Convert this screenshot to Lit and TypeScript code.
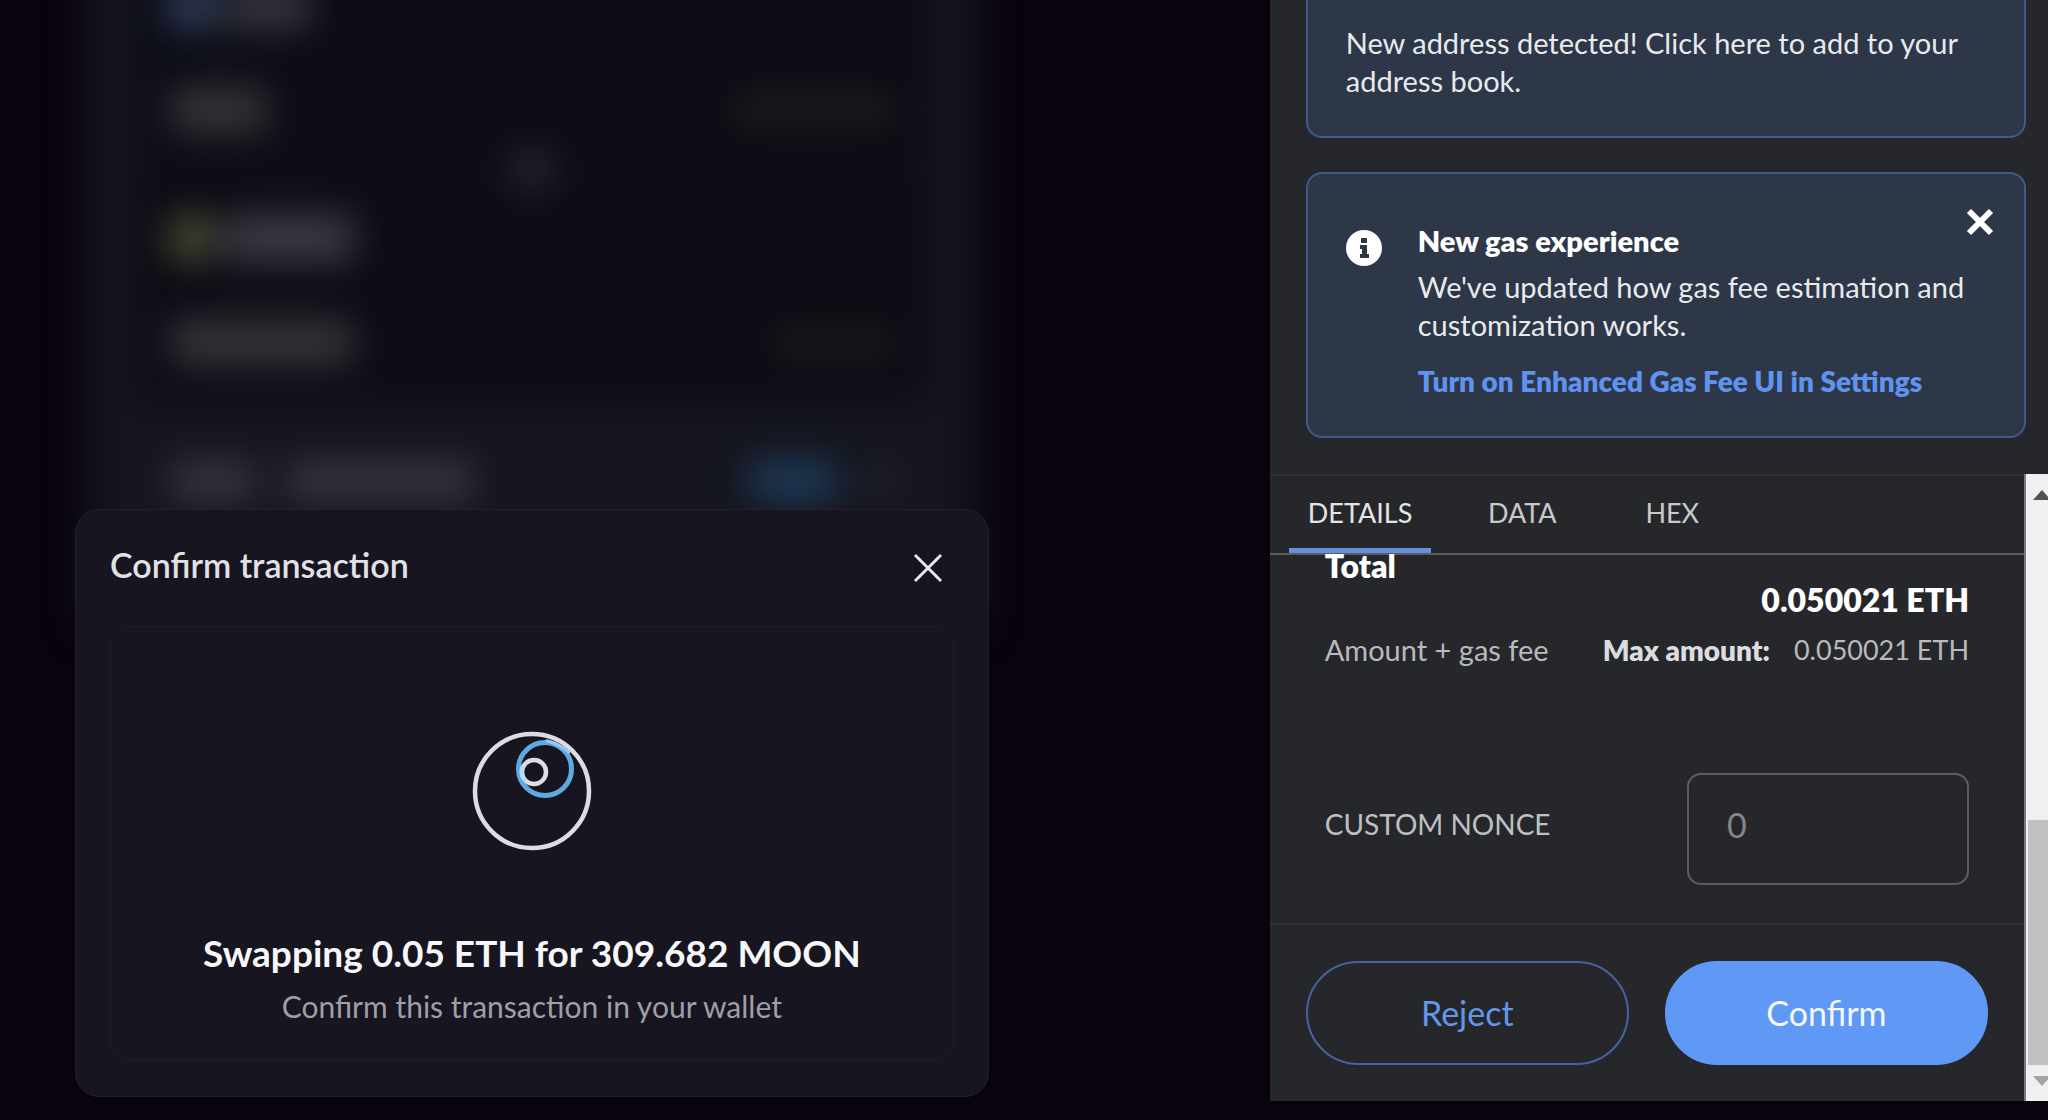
import { LitElement, html, css } from "lit";
import { customElement, state } from "lit/decorators.js";

/** Out-of-focus swap form that sits behind the dialog. */
@customElement("swap-backdrop")
export class SwapBackdrop extends LitElement {
  static styles = css`
    :host {
      display: block;
      filter: blur(18px);
    }
    .card {
      margin: -60px 8px 0;
      padding: 0 52px 130px;
      border-radius: 20px;
      background: #14151d;
    }
    .field {
      padding: 44px 34px 36px;
      background: #0b0c14;
    }
    .row {
      display: flex;
      align-items: center;
      gap: 10px;
      height: 44px;
    }
    .row + .row {
      margin-top: 60px;
    }
    .push {
      margin-left: auto;
    }
    .blob {
      height: 48px;
      border-radius: 12px;
      background: #333338;
    }
    .eth {
      width: 44px;
      background: #344062;
    }
    .moon {
      width: 44px;
      background: #4a4a32;
    }
    .symbol {
      width: 88px;
      background: #34343e;
    }
    .symbol.wide {
      width: 132px;
      background: #3b3b47;
    }
    .amount {
      width: 100px;
    }
    .amount.wide {
      width: 186px;
    }
    .balance {
      width: 164px;
      height: 34px;
      background: #1d1d1e;
    }
    .balance.short {
      width: 124px;
      background: #1a1a1c;
    }
    .flip {
      width: 48px;
      height: 48px;
      margin: -22px auto;
      border-radius: 50%;
      background: #23242f;
      position: relative;
    }
    .rate {
      display: flex;
      gap: 28px;
      padding: 60px 34px 0;
    }
    .rate .blob {
      height: 42px;
      background: #34343e;
    }
    .label {
      width: 88px;
    }
    .value {
      width: 190px;
    }
    .rate .saver {
      width: 92px;
      background: #1e3858;
    }
    .rate .gear {
      width: 28px;
      background: #20212a;
    }
  `;

  render() {
    return html`
      <div class="card" aria-hidden="true">
        <div class="field">
          <div class="row"><div class="blob eth"></div><div class="blob symbol"></div></div>
          <div class="row">
            <div class="blob amount"></div>
            <div class="blob balance push"></div>
          </div>
        </div>
        <div class="flip"></div>
        <div class="field">
          <div class="row"><div class="blob moon"></div><div class="blob symbol wide"></div></div>
          <div class="row">
            <div class="blob amount wide"></div>
            <div class="blob balance short push"></div>
          </div>
        </div>
        <div class="rate">
          <div class="blob label"></div>
          <div class="blob value"></div>
          <div class="blob saver push"></div>
          <div class="blob gear"></div>
        </div>
      </div>
    `;
  }
}

@customElement("confirm-dialog")
export class ConfirmDialog extends LitElement {
  static styles = css`
    :host {
      display: block;
      font-family: Lato, "Liberation Sans", sans-serif;
    }
    .dialog {
      box-sizing: border-box;
      padding: 36px 34px;
      border: 1px solid #201f2a;
      border-radius: 24px;
      background: #171520;
      color: #e2e1e6;
    }
    .head {
      display: flex;
      align-items: flex-start;
      justify-content: space-between;
      padding-right: 10px;
      margin-bottom: 40px;
    }
    .title {
      margin: 0;
      font-size: 34px;
      line-height: 38px;
      font-weight: 600;
    }
    .close {
      display: flex;
      padding: 6px 0 2px;
      border: 0;
      background: none;
      color: #e8e7ec;
    }
    .body {
      display: flex;
      flex-direction: column;
      align-items: center;
      padding: 104px 24px 36px;
      border: 1px solid #1d1c27;
      border-radius: 20px;
      text-align: center;
    }
    .summary {
      margin: 78px 0 12px;
      font-size: 37px;
      line-height: 48px;
      font-weight: 700;
      color: #f7f7f9;
    }
    .hint {
      margin: 0;
      font-size: 30px;
      line-height: 34px;
      color: #a09fa6;
    }
  `;

  render() {
    return html`
      <section class="dialog" role="dialog" aria-labelledby="title">
        <header class="head">
          <h2 class="title" id="title">Confirm transaction</h2>
          <button class="close" type="button" aria-label="Close">
            <svg width="32" height="32" viewBox="0 0 32 32" fill="none" stroke="currentColor" stroke-width="3">
              <path d="M3 3 29 29M29 3 3 29" />
            </svg>
          </button>
        </header>
        <div class="body">
          <svg width="120" height="120" viewBox="0 0 120 120" fill="none" aria-hidden="true">
            <circle cx="60" cy="60" r="57" stroke="#dddce2" stroke-width="4.5" />
            <circle cx="73" cy="38" r="26.5" stroke="#5fa9e0" stroke-width="5" />
            <path d="M74 9.500 A57 57 0 0 1 98 22" stroke="#94c9f0" stroke-width="3" />
            <circle cx="62" cy="41" r="12" stroke="#dedde2" stroke-width="4.5" />
            <path d="M50.500 35 A12 12 0 0 0 54 50" stroke="#b4daf6" stroke-width="3.500" />
          </svg>
          <p class="summary">Swapping 0.05 ETH for 309.682 MOON</p>
          <p class="hint">Confirm this transaction in your wallet</p>
        </div>
      </section>
    `;
  }
}

@customElement("wallet-popup")
export class WalletPopup extends LitElement {
  static styles = css`
    :host {
      display: block;
      font-family: Lato, "Liberation Sans", sans-serif;
      font-size: 29px;
      line-height: 38px;
      color: #dcdde0;
      background: #26272b;
    }
    .alerts {
      display: grid;
      gap: 34px;
      padding: 0 22px 36px 36px;
    }
    .alert {
      position: relative;
      display: flex;
      gap: 36px;
      padding: 48px 36px 36px 38px;
      border: 2px solid #3e5a92;
      border-radius: 16px;
      background: #2d3748;
      color: #e8eaed;
    }
    .alert.first {
      padding-top: 24px;
      border-top: 0;
      border-radius: 0 0 16px 16px;
    }
    .alert p {
      margin: 0;
    }
    .info {
      flex: none;
      margin-top: 8px;
    }
    .copy {
      display: grid;
      gap: 8px;
      justify-items: start;
    }
    .copy h3 {
      margin: 0;
      font-size: 29px;
      font-weight: 800;
      color: #ffffff;
    }
    .copy .link {
      margin-top: 10px;
      font-size: 28px;
      font-weight: 800;
      color: #5f93ee;
      text-decoration: none;
    }
    .dismiss {
      position: absolute;
      top: 34px;
      right: 30px;
      display: flex;
      padding: 0;
      border: 0;
      background: none;
      color: #ffffff;
    }
    .scroller {
      display: flex;
    }
    .main {
      flex: 1;
      min-width: 0;
      border-top: 2px solid #303136;
    }
    .tabs {
      display: flex;
      gap: 32px;
      padding-left: 19px;
      border-bottom: 2px solid #5b5c61;
    }
    .tab {
      min-width: 118px;
      padding: 18px 19px 16px;
      border: 0;
      border-bottom: 5px solid transparent;
      background: none;
      font: inherit;
      font-size: 27px;
      color: #c8c9cc;
    }
    .tab.active {
      color: #e4e5e7;
      border-bottom-color: #6690dc;
    }
    .totals,
    .nonce {
      padding: 0 55px;
    }
    .total {
      line-height: 22px;
      font-size: 32px;
      font-weight: 800;
      color: #ffffff;
    }
    .sum {
      margin: 4px 0 12px;
      font-size: 32px;
      font-weight: 800;
      text-align: right;
      color: #ffffff;
    }
    .line {
      display: flex;
      gap: 24px;
      color: #b9babd;
    }
    .line .caption {
      margin-right: auto;
    }
    .line .figure {
      font-size: 27px;
    }
    .line strong {
      font-size: 28px;
      font-weight: 800;
      color: #dcdde0;
    }
    .nonce {
      display: flex;
      align-items: center;
      justify-content: space-between;
      margin: 104px 0 38px;
      font-size: 28px;
      color: #bfc0c3;
    }
    .nonce label {
      padding-bottom: 10px;
    }
    .nonce input {
      box-sizing: border-box;
      width: 282px;
      height: 112px;
      padding: 0 38px 10px;
      border: 2px solid #5c5d62;
      border-radius: 14px;
      background: transparent;
      font: inherit;
      font-size: 34px;
      color: #ffffff;
    }
    .nonce input::placeholder {
      color: #85868b;
      opacity: 1;
    }
    .actions {
      display: grid;
      grid-template-columns: 1fr 1fr;
      gap: 36px;
      padding: 36px;
      border-top: 2px solid #303136;
    }
    .action {
      height: 104px;
      border: 2px solid #45639f;
      border-radius: 52px;
      background: transparent;
      font: inherit;
      font-size: 34px;
      color: #6496ec;
    }
    .action.primary {
      border-color: #6098f6;
      background: #6098f6;
      color: #f4f8ff;
    }
    .bar {
      display: flex;
      flex-direction: column;
      box-sizing: border-box;
      width: 24px;
      border-left: 2px solid #7a7a7e;
      background: #f0f0f1;
    }
    .bar svg {
      flex: none;
      margin-left: 2px;
    }
    .thumb {
      height: 245px;
      margin: auto 0 0 2px;
      background: #c1c1c2;
    }
  `;

  @state() private tab = "DETAILS";

  private tabs = ["DETAILS", "DATA", "HEX"];

  render() {
    return html`
      <div class="alerts">
        <div class="alert first">
          <p>New address detected! Click here to add to your address book.</p>
        </div>
        <div class="alert">
          <svg class="info" width="36" height="36" viewBox="0 0 36 36" aria-hidden="true">
            <circle cx="18" cy="18" r="18" fill="#ffffff" />
            <path d="M15 8h6v5h-6zM14 15h7v9h2v4h-9v-4h2v-5h-2z" fill="#2d3748" />
          </svg>
          <div class="copy">
            <h3>New gas experience</h3>
            <p>We've updated how gas fee estimation and customization works.</p>
            <a class="link" href="#settings">Turn on Enhanced Gas Fee UI in Settings</a>
          </div>
          <button class="dismiss" type="button" aria-label="Dismiss">
            <svg width="28" height="28" viewBox="0 0 28 28" fill="none" stroke="currentColor" stroke-width="6">
              <path d="M3 3 25 25M25 3 3 25" />
            </svg>
          </button>
        </div>
      </div>
      <div class="scroller">
        <div class="main">
          <nav class="tabs" role="tablist">
            ${this.tabs.map(
              (name) => html`<button
                type="button"
                role="tab"
                aria-selected=${name === this.tab}
                class=${name === this.tab ? "tab active" : "tab"}
                @click=${() => (this.tab = name)}
              >${name}</button>`
            )}
          </nav>
          <div class="totals">
            <div class="total">Total</div>
            <div class="sum">0.050021 ETH</div>
            <div class="line">
              <span class="caption">Amount + gas fee</span>
              <strong>Max amount:</strong>
              <span class="figure">0.050021 ETH</span>
            </div>
          </div>
          <div class="nonce">
            <label for="nonce">CUSTOM NONCE</label>
            <input id="nonce" type="text" inputmode="numeric" placeholder="0" />
          </div>
          <div class="actions">
            <button class="action" type="button">Reject</button>
            <button class="action primary" type="button">Confirm</button>
          </div>
        </div>
        <div class="bar" aria-hidden="true">
          <svg width="20" height="36" viewBox="0 0 20 36"><path d="M5 26 14 16 23 26z" fill="#505052" /></svg>
          <div class="thumb"></div>
          <svg width="20" height="36" viewBox="0 0 20 36"><path d="M5 11 14 21 23 11z" fill="#a3a3a5" /></svg>
        </div>
      </div>
    `;
  }
}

@customElement("app-root")
export class AppRoot extends LitElement {
  static styles = css`
    :host {
      display: block;
    }
    .page {
      display: grid;
      grid-template-columns: 62fr 38fr;
      align-items: start;
      box-sizing: border-box;
      min-height: 100vh;
      padding-bottom: 19px;
      overflow: hidden;
      background: #09030e;
    }
    .site {
      display: grid;
      grid-template-columns: 13fr 4fr;
      align-self: stretch;
      padding-left: 75px;
    }
    .site > * {
      grid-area: 1 / 1;
    }
    .backdrop {
      align-self: start;
    }
    .overlay {
      z-index: 1;
      align-self: end;
      margin-bottom: 4px;
    }
  `;

  render() {
    return html`
      <main class="page">
        <div class="site">
          <swap-backdrop class="backdrop"></swap-backdrop>
          <confirm-dialog class="overlay"></confirm-dialog>
        </div>
        <wallet-popup></wallet-popup>
      </main>
    `;
  }
}
